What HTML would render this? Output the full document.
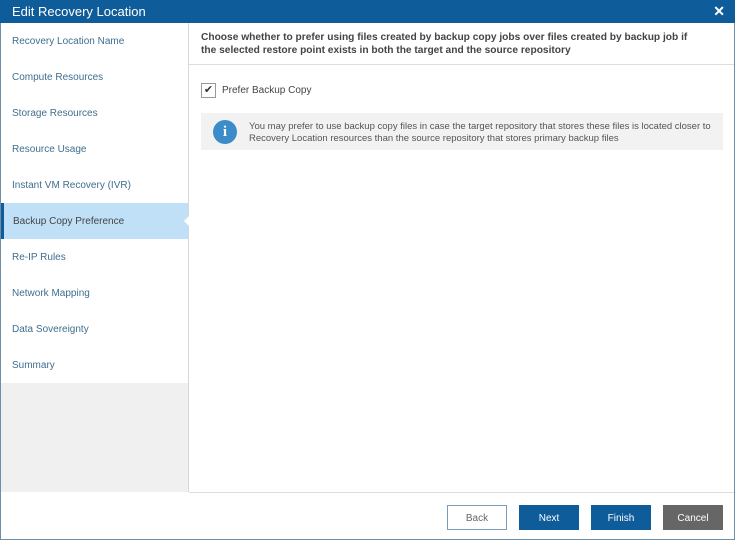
<!DOCTYPE html>
<html><head><style>
body{margin:0;width:735px;height:540px;overflow:hidden;font-family:"Liberation Sans",sans-serif;background:#fff;position:relative}
.win{position:absolute;left:0;top:0;width:733px;height:538px;border:1px solid #6f8fa8}
.title{position:absolute;left:0;top:0;width:735px;height:23px;background:#0f5c9b;color:#fff;font-size:13px;line-height:23px}
.title span{position:absolute;left:12px}
.title b{position:absolute;right:10px;top:0;font-size:14px}
.nav{position:absolute;left:1px;top:23px;width:187px;height:469px;background:#f0f0f0;border-right:1px solid #d8d8d8}
.nav .list{background:#fff;height:360px}
.nav div.i{height:36px;line-height:38px;padding-left:11px;font-size:10px;color:#3f6e8f;box-sizing:border-box}
.nav div.sel{background:#bfe0f7;color:#444;border-left:3px solid #0f5c9b;padding-left:9px;position:relative}
.nav div.sel:after{content:"";position:absolute;right:-1px;top:13px;border:5px solid transparent;border-right-color:#fff}
.head{position:absolute;left:189px;top:23px;width:545px;height:42px;border-bottom:1px solid #ddd;font-size:10.2px;font-weight:bold;color:#444;box-sizing:border-box;padding:9px 12px;line-height:12.5px;white-space:nowrap}
.cb{position:absolute;left:201px;top:83px;width:13px;height:13px;border:1px solid #999;font-size:11px;line-height:13px;text-align:center;color:#333}
.cbl{position:absolute;left:222px;top:85px;font-size:10px;color:#444}
.info{position:absolute;left:201px;top:113px;width:522px;height:37px;background:#f2f2f2}
.ic{position:absolute;left:12px;top:7px;width:24px;height:24px;border-radius:50%;background:#3b8cc8;color:#fff;font-weight:bold;font-family:"Liberation Serif",serif;font-size:15px;text-align:center;line-height:24px}
.info p{position:absolute;left:48px;top:8px;margin:0;font-size:9.5px;color:#555;line-height:12px;white-space:nowrap}
.foot{position:absolute;left:189px;top:492px;width:545px;border-top:1px solid #ddd}
.btn{position:absolute;top:505px;width:60px;height:25px;font-size:10px;text-align:center;line-height:28px;color:#fff;box-sizing:border-box}
</style></head><body>
<div class="win"></div>
<div class="title"><span>Edit Recovery Location</span><b>✕</b></div>
<div class="nav"><div class="list">
<div class="i">Recovery Location Name</div><div class="i">Compute Resources</div><div class="i">Storage Resources</div><div class="i">Resource Usage</div><div class="i">Instant VM Recovery (IVR)</div><div class="i sel">Backup Copy Preference</div><div class="i">Re-IP Rules</div><div class="i">Network Mapping</div><div class="i">Data Sovereignty</div><div class="i">Summary</div></div></div>
<div class="head">Choose whether to prefer using files created by backup copy jobs over files created by backup job if<br>the selected restore point exists in both the target and the source repository</div>
<div class="cb">✔</div><div class="cbl">Prefer Backup Copy</div>
<div class="info"><div class="ic">i</div><p>You may prefer to use backup copy files in case the target repository that stores these files is located closer to<br>Recovery Location resources than the source repository that stores primary backup files</p></div>
<div class="foot"></div>
<div class="btn" style="left:447px;background:#fff;border:1px solid #7a9cb8;color:#666;line-height:26px">Back</div>
<div class="btn" style="left:519px;background:#0f5c9b">Next</div>
<div class="btn" style="left:591px;background:#0f5c9b">Finish</div>
<div class="btn" style="left:663px;background:#666">Cancel</div>
</body></html>
